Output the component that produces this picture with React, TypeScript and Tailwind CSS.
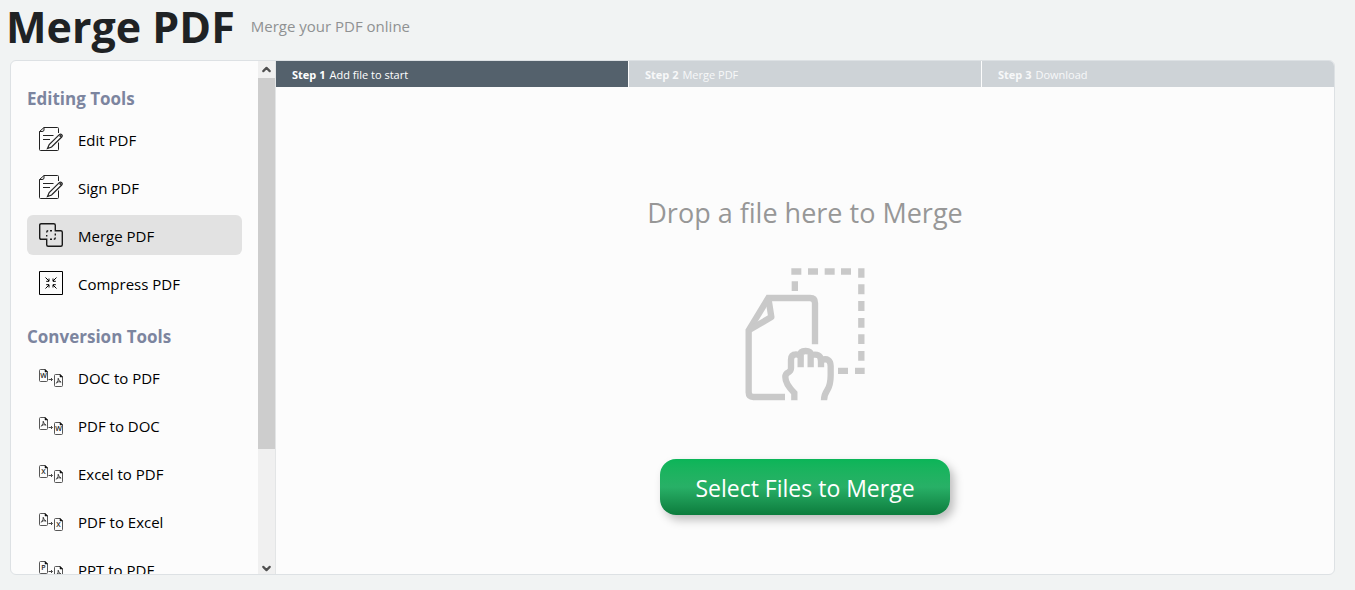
import { useRef } from "react";
import type { ReactNode } from "react";
import { ChevronDown, ChevronUp } from "lucide-react";

function NoteIcon() {
  return (
    <svg className="size-6 shrink-0" viewBox="0 0 24 24" fill="none" stroke="#222" aria-hidden="true">
      <path d="M19.500 6V1.500Q19.500.5 18.500.5H5L.5 4.500V22.500Q.5 23.500 1.500 23.500H18.500Q19.500 23.500 19.500 22.500V15.500" />
      <path d="M5 .5V3Q5 4.500 3 4.500H.5M4 8.500H14.500M4 12.500H11" />
      <path d="M8.500 21.500L10.200 17.500 20.300 7.600Q21.500 6.500 22.700 7.600 23.800 8.700 22.700 10L12.600 20Z" strokeWidth="1.200" />
      <path d="M20.500 8.500L22.500 9.500" strokeWidth="1.800" />
    </svg>
  );
}

function MergeIcon() {
  return (
    <svg className="size-6 shrink-0" viewBox="0 0 24 24" fill="none" stroke="#1a1a1a" strokeWidth="1.400" aria-hidden="true">
      <path d="M7.700 16.300H2.200Q.7 16.300.7 14.800V2.200Q.7.7 2.200.7H14.800Q16.300.7 16.300 2.200V7.700H21.800Q23.300 7.700 23.300 9.200V21.800Q23.300 23.300 21.800 23.300H9.200Q7.700 23.300 7.700 21.800Z" />
      <path d="M7.700 13.500V12M7.700 9.500V9.200Q7.700 7.700 9.200 7.700M11 7.700H13M16.300 10.500V12.500M16.300 14.500V14.800Q16.300 16.300 14.800 16.300M13 16.300H11" />
    </svg>
  );
}

function CompressIcon() {
  return (
    <svg className="size-6 shrink-0" viewBox="0 0 24 24" fill="none" stroke="#000" aria-hidden="true">
      <path d="M.5.5H23.500V23.500H.5Z" />
      <path
        d="M6.500 6.500L10 10M10 7.500V10.300H7.200M17.500 6.500L14 10M14 7.500V10.300H16.800M6.500 17.500L10 14M10 16.500V13.700H7.200M17.500 17.500L14 14M14 16.500V13.700H16.800"
      />
    </svg>
  );
}

function Sheet({ x, y, mark }: { x: number; y: number; mark: string }) {
  return (
    <g transform={`translate(${x} ${y})`}>
      <path d="M1.500.5H6L8.500 3V11.500Q8.500 12.500 7.500 12.500H1.500Q.5 12.500.5 11.500V1.500Q.5.5 1.500.5Z" fill="none" stroke="#444" strokeWidth=".9" />
      <path d="M6 .3V3H8.700Z" fill="#111" stroke="#111" strokeWidth=".5" />
      {mark === "pdf" ? (
        <path d="M4.300 4Q4.800 6.200 2.200 9.500M4.300 4.500Q4.500 7 7.200 8.200M2.800 8.500Q4.500 7.200 7 8" fill="none" stroke="#333" strokeWidth=".9" />
      ) : (
        <text x="4.500" y="9" textAnchor="middle" fontSize="7" fontWeight="600" fill="#222">
          {mark}
        </text>
      )}
    </g>
  );
}

function ConvertIcon({ from, to }: { from: string; to: string }) {
  return (
    <svg className="size-6 shrink-0" viewBox="0 0 24 24" aria-hidden="true">
      <Sheet x={0} y={4} mark={from} />
      <path d="M9.500 14.500H13.200M12 13L13.500 14.500 12 16" fill="none" stroke="#333" strokeWidth=".9" />
      <Sheet x={15} y={9} mark={to} />
    </svg>
  );
}

function DropIcon() {
  return (
    <svg className="my-8 h-[134px] w-30" viewBox="75 50 360 402" fill="none" stroke="#c9c9c9" strokeWidth="19" aria-hidden="true">
      <path d="M285 282V158Q285 143 270 143H145L86 240V426Q86 440 100 440H195" />
      <path d="M145 143L154 200L86 240" strokeLinejoin="round" />
      <path d="M214 63.500H244M264 63.500H294M314 63.500H344M363 63.500H393M354 361.500H384M405 361.500H434M224.500 93V122" />
      <path d="M424 54V82M424 102V132M424 152V182M424 203V232M424 252V281M424 302V331" />
      <path d="M223 450V428C207 412 196 398 196 380Q196 370 205 366Q213 362 213 354V328Q213 312 228 312Q234 312 240 316Q240 302 257 302Q272 302 274 314Q301 308 303 329Q332 320 332 348V375Q332 405 321 421Q312 434 312 450" />
      <path d="M242 314V351M272 314V351M303 324V351" />
    </svg>
  );
}

const sections: { title: string; tools: { name: string; icon: ReactNode; active?: boolean }[] }[] = [
  {
    title: "Editing Tools",
    tools: [
      { name: "Edit PDF", icon: <NoteIcon /> },
      { name: "Sign PDF", icon: <NoteIcon /> },
      { name: "Merge PDF", icon: <MergeIcon />, active: true },
      { name: "Compress PDF", icon: <CompressIcon /> },
    ],
  },
  {
    title: "Conversion Tools",
    tools: [
      { name: "DOC to PDF", icon: <ConvertIcon from="W" to="pdf" /> },
      { name: "PDF to DOC", icon: <ConvertIcon from="pdf" to="W" /> },
      { name: "Excel to PDF", icon: <ConvertIcon from="X" to="pdf" /> },
      { name: "PDF to Excel", icon: <ConvertIcon from="pdf" to="X" /> },
      { name: "PPT to PDF", icon: <ConvertIcon from="P" to="pdf" /> },
    ],
  },
];

const steps = ["Add file to start", "Merge PDF", "Download"];

function Sidebar() {
  const list = useRef<HTMLElement>(null);
  const scroll = (top: number) => list.current?.scrollBy({ top, behavior: "smooth" });

  return (
    <aside className="flex w-[265px] shrink-0 border-r border-[#e3e5e6]">
      <nav ref={list} className="flex-1 overflow-y-auto px-4 pt-[26px] [scrollbar-width:none]">
        {sections.map((section) => (
          <div key={section.title} className="mb-[22px]">
            <h2 className="mb-2 text-[17px] leading-6 font-bold text-[#7c859f]">{section.title}</h2>
            <ul className="flex flex-col gap-2">
              {section.tools.map((tool) => (
                <li key={tool.name}>
                  <a
                    href="#"
                    className={`flex h-10 items-center gap-[15px] rounded-md px-3 text-[15px] text-black ${
                      tool.active ? "bg-[#e2e2e2]" : ""
                    }`}
                  >
                    {tool.icon}
                    <span className="pt-0.5">{tool.name}</span>
                  </a>
                </li>
              ))}
            </ul>
          </div>
        ))}
      </nav>
      <div className="flex w-[17px] flex-col bg-[#f0f0f0] text-[#505050]">
        <button type="button" aria-label="Scroll up" className="flex h-[17px] items-center justify-center" onClick={() => scroll(-48)}>
          <ChevronUp size={13} strokeWidth={4} />
        </button>
        <div className="flex-1">
          <div className="h-[371px] max-h-full bg-[#cdcdcd]" />
        </div>
        <button type="button" aria-label="Scroll down" className="flex h-3 items-center justify-center" onClick={() => scroll(48)}>
          <ChevronDown size={13} strokeWidth={4} />
        </button>
      </div>
    </aside>
  );
}

export default function App() {
  return (
    <div className="flex h-screen flex-col bg-[#f1f3f3] pr-5 pb-[15px] pl-[10px] font-['Open_Sans','Noto_Sans',sans-serif]">
      <header className="-ml-1 flex h-[60px] shrink-0 items-center gap-4 pb-[7px]">
        <h1 className="text-[43px] leading-none font-bold text-[#1f2224]">Merge PDF</h1>
        <p className="text-[15px] text-[#8f9192]">Merge your PDF online</p>
      </header>
      <div className="flex min-h-0 flex-1 overflow-hidden rounded-md border border-[#dde1e4] bg-[#fcfcfc]">
        <Sidebar />
        <main className="flex flex-1 flex-col">
          <ol className="grid grid-cols-3 gap-px text-[11px] text-white">
            {steps.map((step, i) => (
              <li key={step} className={`flex h-[26px] items-center gap-1 px-4 pt-0.5 ${i === 0 ? "bg-[#54616c]" : "bg-[#ced3d7] text-[#f7f8f9]"}`}>
                <b>Step {i + 1}</b>
                <span>{step}</span>
              </li>
            ))}
          </ol>
          <div className="flex flex-1 flex-col items-center justify-center pt-12">
            <p className="pb-1 text-[27px] leading-9 text-[#979797]">Drop a file here to Merge</p>
            <DropIcon />
            <button
              type="button"
              className="mt-[26px] h-14 w-[290px] rounded-2xl bg-linear-to-b from-[#0ab558] via-[#28b067] to-[#0c7c3d] pt-1 text-[23px] text-white shadow-[4px_5px_10px_rgba(0,0,0,0.25)]"
            >
              Select Files to Merge
            </button>
          </div>
        </main>
      </div>
    </div>
  );
}
